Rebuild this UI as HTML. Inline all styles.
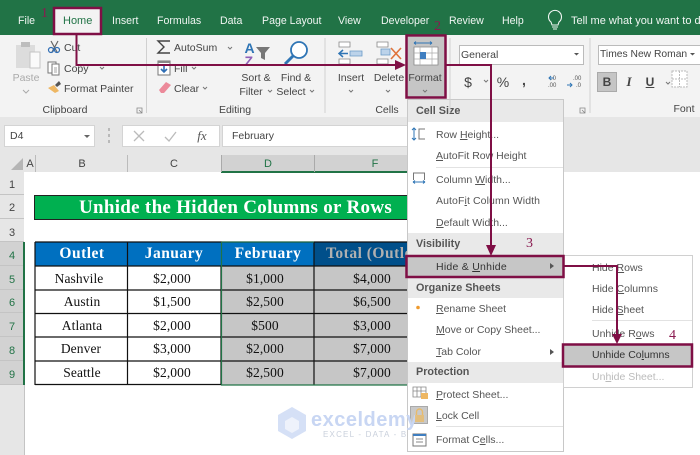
<!DOCTYPE html>
<html><head><meta charset="utf-8"><style>
html,body{margin:0;padding:0;background:#fff}
#p{position:relative;width:700px;height:455px;overflow:hidden;background:#fff;font-family:"Liberation Sans",sans-serif;font-size:10.5px;color:#444;filter:blur(.3px)}
.a{position:absolute;white-space:nowrap}
.t{position:absolute;white-space:nowrap;transform:translateY(calc(-50% + 1px));line-height:14px}
.c{position:absolute;white-space:nowrap;transform:translate(-50%,calc(-50% + 1px));line-height:14px}
.tab{color:#f0f5f2;font-size:10.6px}
.s{font-family:"Liberation Serif",serif;font-size:13.5px;color:#111;letter-spacing:.1px}
.h{font-family:"Liberation Serif",serif;font-weight:bold;font-size:15.5px;color:#fff;letter-spacing:.5px}
.rh{position:absolute;left:0;width:24px;text-align:center;color:#444;font-size:11px;background:#e6e6e6;border-bottom:1px solid #c4c4c4;box-sizing:border-box;padding-top:2px}
.m{color:#555;font-size:10.5px}
.mh{position:absolute;left:408px;width:155px;background:#e9e9e9;font-weight:bold;color:#555;font-size:10.8px;box-sizing:border-box;padding-left:8px}
u{text-decoration:underline}
</style></head><body><div id="p">
<!-- title / ribbon -->
<div class="a" style="left:0;top:0;width:700px;height:35px;background:#217346"></div>
<div class="a" style="left:0;top:35px;width:700px;height:82px;background:#f3f3f3"></div>
<div class="a" style="left:0;top:117px;width:700px;height:55px;background:#e6e6e6"></div>
<div class="a" style="left:54px;top:8px;width:47px;height:27px;background:#f3f3f3"></div>
<div class="t tab" style="left:18px;top:20px">File</div>
<div class="t tab" style="left:63px;top:20px;color:#217346;font-size:11px">Home</div>
<div class="t tab" style="left:112px;top:20px">Insert</div>
<div class="t tab" style="left:157px;top:20px">Formulas</div>
<div class="t tab" style="left:220px;top:20px">Data</div>
<div class="t tab" style="left:262px;top:20px">Page Layout</div>
<div class="t tab" style="left:338px;top:20px">View</div>
<div class="t tab" style="left:381px;top:20px">Developer</div>
<div class="t tab" style="left:449px;top:20px">Review</div>
<div class="t tab" style="left:502px;top:20px">Help</div>
<div class="t tab" style="left:571px;top:20px;font-size:11px">Tell me what you want to do</div>

<!-- ribbon text -->
<div class="c" style="left:26px;top:77px;color:#aaa">Paste</div>
<div class="t" style="left:64px;top:47px">Cut</div>
<div class="t" style="left:64px;top:68px">Copy</div>
<div class="t" style="left:64px;top:88px">Format Painter</div>
<div class="c" style="left:65px;top:109px;font-size:10.5px">Clipboard</div>
<div class="t" style="left:174px;top:47px">AutoSum</div>
<div class="t" style="left:174px;top:68px">Fill</div>
<div class="t" style="left:174px;top:88px">Clear</div>
<div class="c" style="left:256px;top:77px">Sort &amp;</div>
<div class="c" style="left:251px;top:91px">Filter</div>
<div class="c" style="left:296px;top:77px">Find &amp;</div>
<div class="c" style="left:291px;top:91px">Select</div>
<div class="c" style="left:235px;top:109px;font-size:10.5px">Editing</div>
<div class="c" style="left:351px;top:77px">Insert</div>
<div class="c" style="left:389px;top:77px">Delete</div>
<div class="a" style="left:407px;top:37px;width:38px;height:60px;background:#c5c5c5"></div>
<div class="c" style="left:425px;top:77px">Format</div>
<div class="c" style="left:387px;top:109px;font-size:10.5px">Cells</div>
<div class="a" style="left:459px;top:45px;width:123px;height:18px;background:#fff;border:1px solid #bbb"></div>
<div class="t" style="left:461px;top:54px">General</div>
<div class="a" style="left:598px;top:45px;width:110px;height:18px;background:#fff;border:1px solid #bbb"></div>
<div class="t" style="left:600px;top:54px;font-size:10.3px">Times New Roman</div>
<div class="c" style="left:468px;top:81px;font-size:14px">$</div>
<div class="c" style="left:503px;top:81px;font-size:14px">%</div>
<div class="c" style="left:524px;top:79px;font-size:14px;font-weight:bold">,</div>
<div class="a" style="left:597px;top:72px;width:20px;height:20px;background:#c5c5c5;border:1px solid #aaa;box-sizing:border-box"></div>
<div class="c" style="left:607px;top:81px;font-size:12px;font-weight:bold">B</div>
<div class="c" style="left:629px;top:81px;font-size:13px;font-weight:bold;font-style:italic;font-family:'Liberation Serif',serif">I</div>
<div class="c" style="left:650px;top:81px;font-size:12px;font-weight:bold"><u>U</u></div>
<div class="c" style="left:684px;top:108px;font-size:10.5px">Font</div>

<!-- formula bar -->
<div class="a" style="left:4px;top:125px;width:91px;height:22px;background:#fff;border:1px solid #d4d4d4;box-sizing:border-box"></div>
<div class="t" style="left:10px;top:135px">D4</div>
<div class="a" style="left:122px;top:125px;width:98px;height:22px;background:#fff;border:1px solid #d4d4d4;box-sizing:border-box"></div>
<div class="a" style="left:222px;top:125px;width:190px;height:22px;background:#fff;border:1px solid #d4d4d4;box-sizing:border-box"></div>
<div class="t" style="left:232px;top:135px">February</div>
<div class="c" style="left:202px;top:135px;font-family:'Liberation Serif',serif;font-style:italic;font-size:13px;color:#555">fx</div>

<!-- column headers -->
<div class="a" style="left:0;top:155px;width:410px;height:17px;background:#e6e6e6"></div>
<div class="a" style="left:221px;top:155px;width:190px;height:17px;background:#d2d2d2"></div>
<div class="a" style="left:221px;top:171px;width:190px;height:1.5px;background:#217346"></div>
<div class="a" style="left:35px;top:155px;width:1px;height:17px;background:#bbb"></div>
<div class="a" style="left:127px;top:155px;width:1px;height:17px;background:#bbb"></div>
<div class="a" style="left:221px;top:155px;width:1px;height:17px;background:#aaa"></div>
<div class="a" style="left:314px;top:155px;width:1px;height:17px;background:#aaa"></div>
<div class="c" style="left:30px;top:163px;font-size:11px">A</div>
<div class="c" style="left:82px;top:163px;font-size:11px">B</div>
<div class="c" style="left:174px;top:163px;font-size:11px">C</div>
<div class="c" style="left:268px;top:163px;font-size:11px;color:#217346">D</div>
<div class="c" style="left:375px;top:163px;font-size:11px;color:#217346">F</div>

<!-- row headers -->
<div class="a" style="left:0;top:172px;width:24px;height:283px;background:#e6e6e6"></div>
<div class="rh" style="top:172px;height:23px;line-height:22px">1</div>
<div class="rh" style="top:195px;height:24px;line-height:23px">2</div>
<div class="rh" style="top:219px;height:23px;line-height:24px">3</div>
<div class="rh" style="top:242px;height:24px;line-height:24px;background:#d2d2d2;color:#217346">4</div>
<div class="rh" style="top:266px;height:24px;line-height:24px;background:#d2d2d2;color:#217346">5</div>
<div class="rh" style="top:290px;height:23px;line-height:23px;background:#d2d2d2;color:#217346">6</div>
<div class="rh" style="top:313px;height:24px;line-height:24px;background:#d2d2d2;color:#217346">7</div>
<div class="rh" style="top:337px;height:24px;line-height:24px;background:#d2d2d2;color:#217346">8</div>
<div class="rh" style="top:361px;height:24px;line-height:24px;background:#d2d2d2;color:#217346">9</div>
<div class="a" style="left:23px;top:242px;width:1.5px;height:143px;background:#217346"></div>
<div class="a" style="left:24px;top:385px;width:1px;height:70px;background:#c4c4c4"></div>

<!-- sheet -->
<div class="a" style="left:34px;top:195px;width:376px;height:25px;background:#00b050;border:1px solid #222;box-sizing:border-box"></div>
<div class="c" style="left:235.500px;top:207px;font-family:'Liberation Serif',serif;font-weight:bold;font-size:19px;color:#fff;letter-spacing:.3px">Unhide the Hidden Columns or Rows</div>

<div class="a" style="left:35px;top:242px;width:186px;height:24px;background:#0070c0"></div>
<div class="a" style="left:221px;top:242px;width:93px;height:24px;background:#0070c0"></div>
<div class="a" style="left:314px;top:242px;width:96px;height:24px;background:#004f8a"></div>
<div class="a" style="left:221px;top:266px;width:190px;height:119px;background:#c6c6c6"></div>
<svg class="a" style="left:0;top:0" width="700" height="455">
<g stroke="#111" stroke-width="1.200" fill="none">
<path d="M35 242H410M35 266H410M35 290H410M35 313.500H410M35 337H410M35 361H410M35 384.500H221"/>
<path d="M35 242V385M127.500 242V385M221 266V385M314 242V385"/>
</g>
<path d="M221.500 242V385H410" stroke="#217346" stroke-width="1.200" fill="none"/>
<path d="M221.500 242H314" stroke="#217346" stroke-width="1" fill="none"/>
<path d="M11 170L23 158V170Z" fill="#b5b5b5"/>
<path d="M109 128V131M109 134V137M109 140V143" stroke="#aaa" stroke-width="1.500"/>
<path d="M134 131L144 141M144 131L134 141" stroke="#bbb" stroke-width="1.300" fill="none"/>
<path d="M165 137L169 141L176 132" stroke="#bbb" stroke-width="1.300" fill="none"/>
<path d="M84 135H90L87 138Z" fill="#666"/>
</svg>
<div class="c h" style="left:82px;top:253px">Outlet</div>
<div class="c h" style="left:174px;top:253px">January</div>
<div class="c h" style="left:268px;top:253px">February</div>
<div class="a h" style="left:326px;top:246px;color:#b0b0b0;width:84px;overflow:hidden;line-height:16px">Total (Outlet)</div>

<div class="c s" style="left:79px;top:278px">Nashvile</div><div class="c s" style="left:172px;top:278px">$2,000</div><div class="c s" style="left:265px;top:278px">$1,000</div><div class="c s" style="left:372px;top:278px">$4,000</div>
<div class="c s" style="left:82px;top:301px">Austin</div><div class="c s" style="left:172px;top:301px">$1,500</div><div class="c s" style="left:265px;top:301px">$2,500</div><div class="c s" style="left:372px;top:301px">$6,500</div>
<div class="c s" style="left:82px;top:325px">Atlanta</div><div class="c s" style="left:172px;top:325px">$2,000</div><div class="c s" style="left:265px;top:325px">$500</div><div class="c s" style="left:372px;top:325px">$3,000</div>
<div class="c s" style="left:81px;top:348px">Denver</div><div class="c s" style="left:172px;top:348px">$3,000</div><div class="c s" style="left:265px;top:348px">$2,000</div><div class="c s" style="left:372px;top:348px">$7,000</div>
<div class="c s" style="left:82px;top:372px">Seattle</div><div class="c s" style="left:172px;top:372px">$2,000</div><div class="c s" style="left:265px;top:372px">$2,500</div><div class="c s" style="left:372px;top:372px">$7,000</div>

<!-- menu -->
<div class="a" style="left:407px;top:99px;width:157px;height:353px;background:#fff;border:1px solid #c8c8c8;box-sizing:border-box"></div>
<div class="mh" style="top:100px;height:22px;line-height:22px">Cell Size</div>
<div class="t m" style="left:436px;top:134px">Row <u>H</u>eight...</div>
<div class="t m" style="left:436px;top:155px"><u>A</u>utoFit Row Height</div>
<div class="a" style="left:436px;top:167px;width:127px;height:1px;background:#e2e2e2"></div>
<div class="t m" style="left:436px;top:179px">Column <u>W</u>idth...</div>
<div class="t m" style="left:436px;top:200px;letter-spacing:.1px">AutoF<u>i</u>t Column Width</div>
<div class="t m" style="left:436px;top:222px"><u>D</u>efault Width...</div>
<div class="mh" style="top:233px;height:22px;line-height:22px">Visibility</div>
<div class="a" style="left:408px;top:256px;width:155px;height:21px;background:#c6c6c6"></div>
<div class="t m" style="left:436px;top:266px;color:#333;letter-spacing:.25px">Hide &amp; <u>U</u>nhide</div>
<div class="mh" style="top:278px;height:20px;line-height:20px">Organize Sheets</div>
<div class="t m" style="left:436px;top:308px"><u>R</u>ename Sheet</div>
<div class="t m" style="left:436px;top:329px"><u>M</u>ove or Copy Sheet...</div>
<div class="t m" style="left:436px;top:351px"><u>T</u>ab Color</div>
<div class="mh" style="top:362px;height:21px;line-height:21px">Protection</div>
<div class="t m" style="left:436px;top:394px"><u>P</u>rotect Sheet...</div>
<div class="a" style="left:410px;top:406px;width:18px;height:18px;background:#c9c9c9;border:1px solid #aaa;box-sizing:border-box"></div>
<div class="t m" style="left:436px;top:415px"><u>L</u>ock Cell</div>
<div class="a" style="left:436px;top:426px;width:127px;height:1px;background:#e2e2e2"></div>
<div class="t m" style="left:436px;top:439px">Format C<u>e</u>lls...</div>

<!-- watermark (shows through the lock tile) -->
<svg class="a" style="left:278px;top:407px" width="30" height="33"><path d="M14 0L28 8V24L14 32L0 24V8Z" fill="#d5e0f6"/><path d="M14 10L21 14V22L14 26L7 22V14Z" fill="#eef2fb"/></svg>
<div class="a" style="left:311px;top:410px;width:117px;overflow:hidden;font-size:20px;font-weight:bold;color:#c8d6f3;letter-spacing:.5px;line-height:20px">exceldemy</div>
<div class="a" style="left:323px;top:430px;width:84px;overflow:hidden;font-size:8px;color:#c9d0dc;letter-spacing:1.2px;line-height:9px">EXCEL - DATA - BI</div>

<!-- submenu -->
<div class="a" style="left:563px;top:255px;width:130px;height:133px;background:#fff;border:1px solid #d0d0d0;box-sizing:border-box"></div>
<div class="t m" style="left:592px;top:267px">Hide <u>R</u>ows</div>
<div class="t m" style="left:592px;top:288px">Hide <u>C</u>olumns</div>
<div class="t m" style="left:592px;top:309px">Hide <u>S</u>heet</div>
<div class="a" style="left:592px;top:320px;width:100px;height:1px;background:#e2e2e2"></div>
<div class="t m" style="left:592px;top:333px">Unhide R<u>o</u>ws</div>
<div class="a" style="left:563px;top:345px;width:129px;height:21px;background:#c6c6c6"></div>
<div class="t m" style="left:592px;top:354px;color:#333">Unhide Co<u>l</u>umns</div>
<div class="t m" style="left:592px;top:376px;color:#bbb">Un<u>h</u>ide Sheet...</div>

<!-- icons -->
<svg class="a" style="left:0;top:0" width="700" height="455">
<!-- separators -->
<path d="M146.500 38V113M325 38V113M450 38V113M590 38V113" stroke="#d0d0d0"/>
<path d="M137 108h5v5h-5zM139 110l3 3M580 108h5v5h-5zM582 110l3 3" stroke="#888" fill="none" stroke-width=".8"/>
<!-- paste -->
<path d="M16 45H35V68H16Z" fill="#dcdcdc"/><path d="M21 42H30V47H21Z" fill="#bdbdbd"/><path d="M30 52H40V68H30Z" fill="#fafafa" stroke="#c4c4c4"/>
<path d="M23 90l3 3 3-3" stroke="#aaa" fill="none"/>
<!-- scissors -->
<path d="M51 41L57 52M58 41L52 52" stroke="#666" stroke-width="1.200" fill="none"/><circle cx="51" cy="50" r="2.500" fill="none" stroke="#2f6eb5" stroke-width="1.200"/><circle cx="57" cy="50" r="2.500" fill="none" stroke="#2f6eb5" stroke-width="1.200"/>
<!-- copy -->
<path d="M48 62h8v11h-8z" fill="#fff" stroke="#777"/><path d="M52 64h7v11h-7z" fill="#fff" stroke="#777"/><path d="M54 68h3M54 70h3M54 72h3" stroke="#888" stroke-width=".7"/>
<path d="M100 67l2 2 2-2" stroke="#777" fill="none"/>
<!-- painter -->
<path d="M48 88l6-3 5 6-4 2z" fill="#eeb763"/><path d="M55 85l4-4 2 3-4 3z" fill="#555"/>
<!-- sum -->
<path d="M170 41H158L164 47L158 53H170" fill="none" stroke="#444" stroke-width="1.400"/>
<path d="M228 47l2 2 2-2" stroke="#777" fill="none"/>
<!-- fill -->
<path d="M158 61h12v14h-12z" fill="#fff" stroke="#777"/><path d="M158 61h12v2h-12z" fill="#888"/><path d="M164 65v7M161 69l3 3 3-3" stroke="#2f6eb5" stroke-width="1.600" fill="none"/>
<path d="M192 67l2 2 2-2" stroke="#777" fill="none"/>
<!-- eraser -->
<path d="M159 90l7-8 5 3-7 8-3 0z" fill="#ec8a9a"/>
<path d="M203 87l2 2 2-2" stroke="#777" fill="none"/>
<!-- sort filter -->
<text x="244.500" y="53" font-family="Liberation Sans" font-size="14" font-weight="bold" fill="#2f75b5">A</text>
<text x="244.500" y="66" font-family="Liberation Sans" font-size="14" font-weight="bold" fill="#8e5fb8">Z</text>
<path d="M256 47H270L265 53V60L261 58V53Z" fill="#777"/>
<path d="M268 90l2 2 2-2M310 90l2 2 2-2" stroke="#777" fill="none"/>
<!-- find -->
<circle cx="299" cy="50" r="8" fill="#fff" stroke="#2f75b5" stroke-width="1.800"/><path d="M293 56L285 64" stroke="#2f75b5" stroke-width="3"/>
<!-- insert -->
<path d="M339 42h11v5h-11zM339 59h11v5h-11z" fill="#fff" stroke="#888" stroke-width=".8"/><path d="M350 51h12v5h-12z" fill="#bcd3ea" stroke="#6b9bc8" stroke-width=".8"/><path d="M348 53.500h-9M343 50l-4 3.500 4 3.500" stroke="#2f75b5" stroke-width="1.500" fill="none"/>
<!-- delete -->
<path d="M377 42h11v5h-11zM377 59h11v5h-11z" fill="#fff" stroke="#888" stroke-width=".8"/><path d="M381 49h9v6h-9z" fill="#bcd3ea" stroke="#6b9bc8" stroke-width=".8"/><path d="M391 48l10 11M401 48l-10 11" stroke="#e0733a" stroke-width="1.600"/>
<path d="M349 90l2 2 2-2M386 90l2 2 2-2M423 90l2 2 2-2" stroke="#777" fill="none"/>
<!-- format -->
<path d="M414 43h18M414 43l2-1.500M414 43l2 1.500M432 43l-2-1.500M432 43l-2 1.500" stroke="#2f75b5" fill="none"/>
<path d="M414 47h24v18h-24z" fill="#fff" stroke="#888" stroke-width=".8"/><path d="M420 47v18M432 47v18M414 53h24M414 59h24" stroke="#aaa" stroke-width=".7"/><path d="M420 52h6v7h-6z" fill="#3f7ec0"/>
<!-- general arrows -->
<path d="M574 53h5l-2.500 2.500zM690 53h5l-2.500 2.500z" fill="#555"/>
<path d="M484 80l2 2 2-2M666 82l2 2 2-2" stroke="#777" fill="none"/>
<text x="551" y="80" font-family="Liberation Sans" font-size="6" fill="#555">.0</text><text x="548" y="87" font-family="Liberation Sans" font-size="6" fill="#555">.00</text>
<text x="573" y="80" font-family="Liberation Sans" font-size="6" fill="#555">.00</text><text x="576" y="87" font-family="Liberation Sans" font-size="6" fill="#555">.0</text>
<path d="M554 78h-5M551 76l-2 2 2 2M567 85h5M570 83l2 2-2 2" stroke="#2f75b5" fill="none"/>
<path d="M672 71h15v16h-15zM679.500 71v16M672 79h15" fill="#fff" stroke="#bbb" stroke-dasharray="2 1"/>
<!-- bulb -->
<path d="M551 22a6.500 6.500 0 1 1 8 0l-1 3h-6zM552 27h6M553 29h4" fill="none" stroke="#f0f5f2" stroke-width="1.100"/>
<!-- menu icons -->
<path d="M414 128V140M412 130l2-2 2 2M412 138l2 2 2-2" stroke="#2f75b5" fill="none"/>
<path d="M425 129h-6v10h6" stroke="#777" fill="none"/>
<path d="M413.500 180v-7h11v7" stroke="#777" fill="none" transform="translate(0,0)"/><path d="M413 182h12M413 182l2-1.500M413 182l2 1.500M425 182l-2-1.500M425 182l-2 1.500" stroke="#2f75b5" fill="none"/>
<circle cx="418" cy="307.500" r="1.800" fill="#ef9a2e"/>
<path d="M413 387h13v10h-13zM417 387v10M421 387v10M413 391h13" fill="#fff" stroke="#888" stroke-width=".8"/><path d="M421 393h7v6h-7z" fill="#eeb763"/>
<path d="M415 415h9v7h-9z" fill="#e8bb6b" opacity=".8"/><path d="M416.500 415v-3a3 3 0 0 1 6 0v3" fill="none" stroke="#e8bb6b" stroke-width="1.400"/>
<path d="M413 434h13v12h-13z" fill="#fff" stroke="#777"/><path d="M413 434h13v2h-13z" fill="#3f7ec0"/><path d="M416 439h7M416 442h7" stroke="#888"/>
<!-- submenu arrows -->
<path d="M550 263l4 3-4 3zM550 349l4 3-4 3z" fill="#555"/>
<!-- annotations -->
<g fill="none" stroke="#7f0f45">
<rect x="54" y="8" width="47" height="26" stroke-width="2.500"/>
<rect x="406.500" y="35.500" width="39" height="62" stroke-width="2.500"/>
<rect x="406.500" y="256" width="157" height="21" stroke-width="2.500"/>
<rect x="563" y="344.500" width="129" height="22" stroke-width="2.500"/>
<path d="M76.500 34V65H398M446 65H491V246M564 266H617V335" stroke-width="2"/>
</g>
<path d="M395 60L406 65L395 70ZM486 245H496L491 256ZM612 334H622L617 344Z" fill="#7f0f45"/>
<g font-family="Liberation Serif" font-size="14" fill="#8a1a50">
<text x="41" y="17">1</text><text x="434" y="30">2</text><text x="526" y="247">3</text><text x="669" y="339">4</text>
</g>
</svg>
</div></body></html>
